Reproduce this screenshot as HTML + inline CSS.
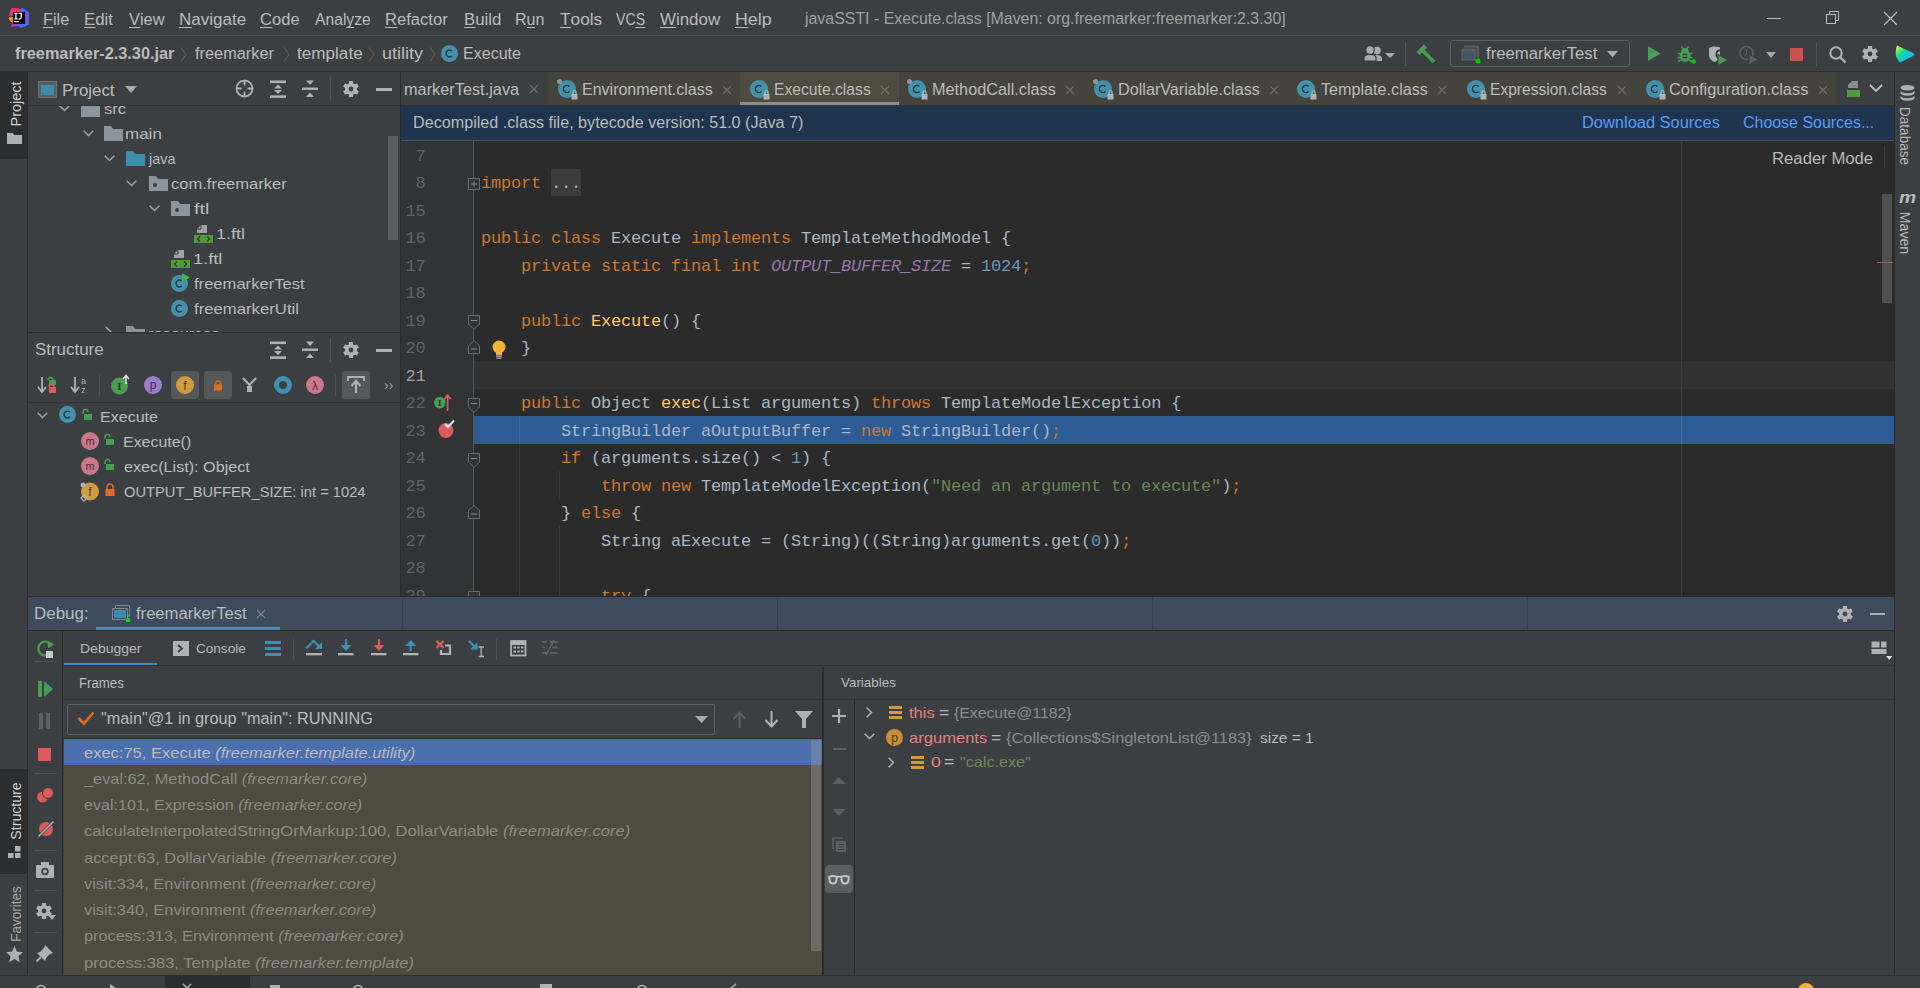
<!DOCTYPE html>
<html><head><meta charset="utf-8">
<style>
*{margin:0;padding:0;box-sizing:border-box}
html,body{width:1920px;height:988px;overflow:hidden;background:#3c3f41}
body{position:relative;font-family:"Liberation Sans",sans-serif;font-size:16px;color:#bbbbbb}
.a{position:absolute}
.t{position:absolute;white-space:nowrap}
.t u{text-decoration:none;border-bottom:1px solid currentColor;display:inline-block;line-height:14px;height:15px}
.cd{position:absolute;font-family:"Liberation Mono",monospace;font-size:17px;letter-spacing:-0.2px;white-space:pre;line-height:17px;color:#a9b7c6}
.k{color:#cc7832}.n{color:#6897bb}.s{color:#6a8759}.f{color:#9876aa;font-style:italic}.y{color:#ffc66d}
svg{position:absolute;overflow:visible}
</style></head>
<body>

<div class="a" style="left:0px;top:0px;width:1920px;height:35px;background:#3c3f41;"></div>
<div class="a" style="left:0px;top:35px;width:1920px;height:1px;background:#4b4e50;"></div>
<svg style="left:0px;top:0px" width="36" height="36" viewBox="0 0 36 36"><defs><linearGradient id="lgb" x1="0" y1="0" x2="0" y2="1"><stop offset="0" stop-color="#3b6ff5"/><stop offset="0.5" stop-color="#7a4ee8"/><stop offset="1" stop-color="#2a7df7"/></linearGradient><linearGradient id="lgp" x1="0" y1="0" x2="0" y2="1"><stop offset="0" stop-color="#ff2a5e"/><stop offset="1" stop-color="#e0308a"/></linearGradient></defs>
<polygon points="23,8 29,12.5 29,24.5 21.5,28 17,25.5 17,10" fill="url(#lgb)"/>
<polygon points="12,8 18.5,8.3 21,11 21,16 9,16 10,11" fill="url(#lgp)"/>
<polygon points="9,17 13,17 13,22 11,22 9,19.5" fill="#ff8a1a"/>
<polygon points="11,27 12.5,22 19,24 17,26" fill="#b43ad8"/>
<rect x="13" y="12" width="12" height="12" fill="#000"/>
<path d="M14.3 13.3H17.6M15.95 13.3V18.8M14.3 18.8H17.6M18.6 13.3H21.2V17.5C21.2 18.5 20.5 19 19.5 19H18.6" fill="none" stroke="#fff" stroke-width="1.3"/>
<rect x="14.2" y="21" width="4.8" height="1.3" fill="#ddd"/></svg>
<div class="t" style="left:43.10px;top:11.96px;font-size:16px;line-height:16px;color:#bbbbbb;transform:scaleX(1.0193);transform-origin:0 0;"><u>F</u>ile</div>
<div class="t" style="left:83.66px;top:11.96px;font-size:16px;line-height:16px;color:#bbbbbb;transform:scaleX(1.0480);transform-origin:0 0;"><u>E</u>dit</div>
<div class="t" style="left:128.75px;top:11.96px;font-size:16px;line-height:16px;color:#bbbbbb;transform:scaleX(1.0233);transform-origin:0 0;"><u>V</u>iew</div>
<div class="t" style="left:178.64px;top:11.96px;font-size:16px;line-height:16px;color:#bbbbbb;transform:scaleX(1.0635);transform-origin:0 0;"><u>N</u>avigate</div>
<div class="t" style="left:260.17px;top:11.96px;font-size:16px;line-height:16px;color:#bbbbbb;transform:scaleX(1.0371);transform-origin:0 0;"><u>C</u>ode</div>
<div class="t" style="left:315.00px;top:11.96px;font-size:16px;line-height:16px;color:#bbbbbb;transform:scaleX(0.9793);transform-origin:0 0;">Anal<u>y</u>ze</div>
<div class="t" style="left:385.27px;top:11.96px;font-size:16px;line-height:16px;color:#bbbbbb;transform:scaleX(1.0366);transform-origin:0 0;"><u>R</u>efactor</div>
<div class="t" style="left:463.95px;top:11.96px;font-size:16px;line-height:16px;color:#bbbbbb;transform:scaleX(1.0517);transform-origin:0 0;"><u>B</u>uild</div>
<div class="t" style="left:515.42px;top:11.96px;font-size:16px;line-height:16px;color:#bbbbbb;transform:scaleX(0.9985);transform-origin:0 0;">R<u>u</u>n</div>
<div class="t" style="left:559.65px;top:11.96px;font-size:16px;line-height:16px;color:#bbbbbb;transform:scaleX(1.0800);transform-origin:0 0;"><u>T</u>ools</div>
<div class="t" style="left:616.30px;top:11.96px;font-size:16px;line-height:16px;color:#bbbbbb;transform:scaleX(0.8831);transform-origin:0 0;">VC<u>S</u></div>
<div class="t" style="left:660.00px;top:11.96px;font-size:16px;line-height:16px;color:#bbbbbb;transform:scaleX(1.0563);transform-origin:0 0;"><u>W</u>indow</div>
<div class="t" style="left:734.58px;top:11.96px;font-size:16px;line-height:16px;color:#bbbbbb;transform:scaleX(1.1115);transform-origin:0 0;"><u>H</u>elp</div>
<div class="t" style="left:805.48px;top:10.96px;font-size:16px;line-height:16px;color:#a0a0a0;transform:scaleX(0.9937);transform-origin:0 0;">javaSSTI - Execute.class [Maven: org.freemarker:freemarker:2.3.30]</div>
<div class="a" style="left:1767px;top:18px;width:14px;height:1px;background:#bbbbbb;"></div>
<svg style="left:1824px;top:10px" width="16" height="16" viewBox="0 0 16 16"><rect x="2.5" y="4.5" width="9" height="9" fill="none" stroke="#bbbbbb"/><path d="M5.5 4.5V1.5H14.5V10.5H11.5" fill="none" stroke="#bbbbbb"/></svg>
<svg style="left:1883px;top:11px" width="15" height="15" viewBox="0 0 15 15"><path d="M1 1L14 14M14 1L1 14" stroke="#bbbbbb" stroke-width="1.2"/></svg>
<div class="a" style="left:0px;top:36px;width:1920px;height:35px;background:#3c3f41;"></div>
<div class="a" style="left:0px;top:71px;width:1920px;height:1px;background:#2b2b2b;"></div>
<div class="t" style="left:15.17px;top:46.46px;font-size:16px;line-height:16px;color:#bbbbbb;transform:scaleX(1.0182);transform-origin:0 0;font-weight:bold;">freemarker-2.3.30.jar</div>
<svg style="left:180px;top:47px" width="7" height="15" viewBox="0 0 7 15"><path d="M1 0.5L6 7.5L1 14.5" fill="none" stroke="#5e6060" stroke-width="1.1"/></svg>
<div class="t" style="left:195.24px;top:46.46px;font-size:16px;line-height:16px;color:#bbbbbb;transform:scaleX(1.0213);transform-origin:0 0;">freemarker</div>
<svg style="left:283px;top:47px" width="7" height="15" viewBox="0 0 7 15"><path d="M1 0.5L6 7.5L1 14.5" fill="none" stroke="#5e6060" stroke-width="1.1"/></svg>
<div class="t" style="left:296.53px;top:46.46px;font-size:16px;line-height:16px;color:#bbbbbb;transform:scaleX(1.0698);transform-origin:0 0;">template</div>
<svg style="left:368px;top:47px" width="7" height="15" viewBox="0 0 7 15"><path d="M1 0.5L6 7.5L1 14.5" fill="none" stroke="#5e6060" stroke-width="1.1"/></svg>
<div class="t" style="left:381.92px;top:46.46px;font-size:16px;line-height:16px;color:#bbbbbb;transform:scaleX(1.1261);transform-origin:0 0;">utility</div>
<svg style="left:429px;top:47px" width="7" height="15" viewBox="0 0 7 15"><path d="M1 0.5L6 7.5L1 14.5" fill="none" stroke="#5e6060" stroke-width="1.1"/></svg>
<svg style="left:441px;top:45px" width="20" height="20" viewBox="0 0 20 20"><circle cx="8.5" cy="8.5" r="8.5" fill="#4591ab"/><path d="M10.90 6.10A3.40 3.40 0 1 0 10.90 10.90" fill="none" stroke="#1f3a47" stroke-width="1.45"/></svg>
<div class="t" style="left:462.72px;top:46.46px;font-size:16px;line-height:16px;color:#bbbbbb;transform:scaleX(1.0029);transform-origin:0 0;">Execute</div>
<svg style="left:1363px;top:45px" width="34" height="17" viewBox="0 0 34 17"><path d="M9 16H19V13.5C19 11.5 17 10 14 10C11 10 9 11.5 9 13.5z" fill="#a9a9a9"/><circle cx="14" cy="5.5" r="3.8" fill="#a9a9a9"/><path d="M1 16H13V13C13 10.8 10.5 9.3 7 9.3C3.5 9.3 1 10.8 1 13z" fill="#a9a9a9" stroke="#3c3f41" stroke-width="1.2"/><circle cx="7" cy="5" r="4.3" fill="#a9a9a9" stroke="#3c3f41" stroke-width="1.2"/><path d="M22 8H32L27 13z" fill="#a9a9a9"/></svg>
<div class="a" style="left:1405px;top:42px;width:1px;height:24px;background:#515151;"></div>
<svg style="left:1416px;top:44px" width="20" height="19" viewBox="0 0 20 19"><path d="M0.5 8L8 0.5L11 3.5L3.5 11z" fill="#499c54"/><path d="M6.5 6.5L18 18" stroke="#499c54" stroke-width="3.6"/></svg>
<div class="a" style="left:1450px;top:40px;width:180px;height:27px;background:#3c3f41;border:1px solid #5e6060;border-radius:3px"></div>
<svg style="left:1461px;top:45px" width="20" height="18" viewBox="0 0 20 18"><rect x="3" y="0.5" width="15" height="12" fill="#5a5d5f"/><rect x="0" y="3" width="15" height="13" fill="#5a5d5f" stroke="#3c3f41" stroke-width="1"/><rect x="2" y="6" width="11" height="8" fill="#3a5764"/><circle cx="17" cy="16" r="2.5" fill="#00d000"/></svg>
<div class="t" style="left:1485.83px;top:46.46px;font-size:16px;line-height:16px;color:#bbbbbb;transform:scaleX(1.0432);transform-origin:0 0;">freemarkerTest</div>
<svg style="left:1607px;top:51px" width="11" height="7" viewBox="0 0 11 7"><path d="M0 0H11L5.5 6.5z" fill="#a9a9a9"/></svg>
<svg style="left:1648px;top:46px" width="13" height="16" viewBox="0 0 13 16"><path d="M0 0L12.5 7.5L0 15z" fill="#499c54"/></svg>
<svg style="left:1677px;top:45px" width="19" height="19" viewBox="0 0 19 19"><path d="M4.5 1.5L6.5 4M11.5 1.5L9.5 4" stroke="#499c54" stroke-width="1.6"/><ellipse cx="8" cy="5.5" rx="3.5" ry="2.5" fill="#499c54"/><ellipse cx="8" cy="11" rx="5.5" ry="6" fill="#499c54"/><path d="M0.5 8.5H3M13 8.5H15.5M0.5 12.5H3M13 12.5H15.5M1 16.5L3.5 15M15 16.5L12.5 15" stroke="#499c54" stroke-width="1.5"/><path d="M5.5 9.5H10.5M5.5 12.5H10.5" stroke="#3c3f41" stroke-width="1.3"/><circle cx="16.5" cy="16.5" r="2.3" fill="#00d000"/></svg>
<svg style="left:1708px;top:45px" width="21" height="19" viewBox="0 0 21 19"><path d="M1 3C4 1.5 8 1 12 2.5V10C12 13.5 9 16 6.5 17C4 16 1 13.5 1 10z" fill="#aeb0b2"/><path d="M12 5.5C10 5 8.5 6.5 8.5 9C8.5 12 10 13.5 12 13" fill="none" stroke="#3c3f41" stroke-width="2"/><path d="M10 9.5L20 15L10 20.5z" fill="#499c54" stroke="#3c3f41" stroke-width="1"/></svg>
<svg style="left:1739px;top:45px" width="20" height="20" viewBox="0 0 20 20"><circle cx="7.5" cy="8" r="6.5" fill="none" stroke="#5d5f61" stroke-width="1.6"/><path d="M7.5 4V8.5L6 10.5" stroke="#5d5f61" stroke-width="1.3" fill="none"/><path d="M10 9L19 14.5L10 20z" fill="#5d5f61" stroke="#3c3f41" stroke-width="1"/></svg>
<svg style="left:1766px;top:52px" width="10" height="6" viewBox="0 0 10 6"><path d="M0 0H10L5 6z" fill="#a9a9a9"/></svg>
<div class="a" style="left:1790px;top:48px;width:13px;height:13px;background:#c75450;"></div>
<div class="a" style="left:1816px;top:42px;width:1px;height:24px;background:#515151;"></div>
<svg style="left:1829px;top:46px" width="18" height="17" viewBox="0 0 18 17"><circle cx="7" cy="7" r="5.7" fill="none" stroke="#afb1b3" stroke-width="2"/><path d="M11 11L16.5 16.5" stroke="#afb1b3" stroke-width="2.4"/></svg>
<svg style="left:1862px;top:46px" width="16" height="16" viewBox="0 0 16 16"><rect x="5.92" y="0" width="4.16" height="4.80" rx="0.6" fill="#afb1b3" transform="rotate(0 8.0 8.0)"/><rect x="5.92" y="0" width="4.16" height="4.80" rx="0.6" fill="#afb1b3" transform="rotate(60 8.0 8.0)"/><rect x="5.92" y="0" width="4.16" height="4.80" rx="0.6" fill="#afb1b3" transform="rotate(120 8.0 8.0)"/><rect x="5.92" y="0" width="4.16" height="4.80" rx="0.6" fill="#afb1b3" transform="rotate(180 8.0 8.0)"/><rect x="5.92" y="0" width="4.16" height="4.80" rx="0.6" fill="#afb1b3" transform="rotate(240 8.0 8.0)"/><rect x="5.92" y="0" width="4.16" height="4.80" rx="0.6" fill="#afb1b3" transform="rotate(300 8.0 8.0)"/><circle cx="8.0" cy="8.0" r="5.92" fill="#afb1b3"/><circle cx="8.0" cy="8.0" r="2.40" fill="#3c3f41"/></svg>
<svg style="left:1894px;top:45px" width="22" height="18" viewBox="0 0 22 18"><defs><linearGradient id="lg2" x1="0" y1="0" x2="1" y2="1"><stop offset="0" stop-color="#fcf84a"/><stop offset="0.35" stop-color="#21d789"/><stop offset="0.7" stop-color="#07c3f2"/><stop offset="1" stop-color="#087cfa"/></linearGradient></defs><path d="M3 0.5L18 7.5L21 10L17 12L6 17.5C2.5 14 0 9 3 0.5z" fill="url(#lg2)"/></svg>
<div class="a" style="left:401px;top:72px;width:1494px;height:33px;background:#3c3f41;"></div>
<div class="a" style="left:547px;top:72px;width:1290px;height:33px;background:#45443c;"></div>
<div class="a" style="left:740px;top:72px;width:159px;height:33px;background:#4e4b40;"></div>
<div class="a" style="left:740px;top:102px;width:159px;height:3px;background:#8c8e90;"></div>
<div class="a" style="left:401px;top:105px;width:1494px;height:1px;background:#323232;"></div>
<div class="t" style="left:403.86px;top:82.46px;font-size:16px;line-height:16px;color:#bbbbbb;transform:scaleX(1.0193);transform-origin:0 0;">markerTest.java</div>
<svg style="left:529px;top:84px" width="10" height="10" viewBox="0 0 10 10"><path d="M1 1L9 9M9 1L1 9" stroke="#6d6e6f" stroke-width="1.2"/></svg>
<svg style="left:558px;top:80px" width="21" height="21" viewBox="0 0 21 21"><circle cx="9.0" cy="9.0" r="9.0" fill="#4591ab"/><path d="M11.55 6.45A3.60 3.60 0 1 0 11.55 11.55" fill="none" stroke="#1f3a47" stroke-width="1.53"/><rect x="13.5" y="14" width="6" height="5.5" fill="#aab4bb"/><path d="M15 14v-2a1.5 1.5 0 0 1 3 0v2" fill="none" stroke="#aab4bb" stroke-width="1.2"/><circle cx="1.5" cy="1.5" r="2.5" fill="#9aa4ab" opacity="0.85"/></svg>
<div class="t" style="left:581.72px;top:82.46px;font-size:16px;line-height:16px;color:#bbbbbb;transform:scaleX(1.0003);transform-origin:0 0;">Environment.class</div>
<svg style="left:722px;top:85px" width="10" height="10" viewBox="0 0 10 10"><path d="M1 1L9 9M9 1L1 9" stroke="#6d6e6f" stroke-width="1.2"/></svg>
<svg style="left:750px;top:80px" width="21" height="21" viewBox="0 0 21 21"><circle cx="9.0" cy="9.0" r="9.0" fill="#4591ab"/><path d="M11.55 6.45A3.60 3.60 0 1 0 11.55 11.55" fill="none" stroke="#1f3a47" stroke-width="1.53"/><rect x="13.5" y="14" width="6" height="5.5" fill="#aab4bb"/><path d="M15 14v-2a1.5 1.5 0 0 1 3 0v2" fill="none" stroke="#aab4bb" stroke-width="1.2"/></svg>
<div class="t" style="left:773.75px;top:82.46px;font-size:16px;line-height:16px;color:#bbbbbb;transform:scaleX(0.9798);transform-origin:0 0;">Execute.class</div>
<svg style="left:880px;top:85px" width="10" height="10" viewBox="0 0 10 10"><path d="M1 1L9 9M9 1L1 9" stroke="#6d6e6f" stroke-width="1.2"/></svg>
<svg style="left:908px;top:80px" width="21" height="21" viewBox="0 0 21 21"><circle cx="9.0" cy="9.0" r="9.0" fill="#4591ab"/><path d="M11.55 6.45A3.60 3.60 0 1 0 11.55 11.55" fill="none" stroke="#1f3a47" stroke-width="1.53"/><rect x="13.5" y="14" width="6" height="5.5" fill="#aab4bb"/><path d="M15 14v-2a1.5 1.5 0 0 1 3 0v2" fill="none" stroke="#aab4bb" stroke-width="1.2"/><circle cx="1.5" cy="1.5" r="2.5" fill="#9aa4ab" opacity="0.85"/></svg>
<div class="t" style="left:931.70px;top:82.46px;font-size:16px;line-height:16px;color:#bbbbbb;transform:scaleX(1.0167);transform-origin:0 0;">MethodCall.class</div>
<svg style="left:1065px;top:85px" width="10" height="10" viewBox="0 0 10 10"><path d="M1 1L9 9M9 1L1 9" stroke="#6d6e6f" stroke-width="1.2"/></svg>
<svg style="left:1094px;top:80px" width="21" height="21" viewBox="0 0 21 21"><circle cx="9.0" cy="9.0" r="9.0" fill="#4591ab"/><path d="M11.55 6.45A3.60 3.60 0 1 0 11.55 11.55" fill="none" stroke="#1f3a47" stroke-width="1.53"/><rect x="13.5" y="14" width="6" height="5.5" fill="#aab4bb"/><path d="M15 14v-2a1.5 1.5 0 0 1 3 0v2" fill="none" stroke="#aab4bb" stroke-width="1.2"/><circle cx="1.5" cy="1.5" r="2.5" fill="#9aa4ab" opacity="0.85"/></svg>
<div class="t" style="left:1117.71px;top:82.46px;font-size:16px;line-height:16px;color:#bbbbbb;transform:scaleX(1.0116);transform-origin:0 0;">DollarVariable.class</div>
<svg style="left:1269px;top:85px" width="10" height="10" viewBox="0 0 10 10"><path d="M1 1L9 9M9 1L1 9" stroke="#6d6e6f" stroke-width="1.2"/></svg>
<svg style="left:1297px;top:80px" width="21" height="21" viewBox="0 0 21 21"><circle cx="9.0" cy="9.0" r="9.0" fill="#4591ab"/><path d="M11.55 6.45A3.60 3.60 0 1 0 11.55 11.55" fill="none" stroke="#1f3a47" stroke-width="1.53"/><rect x="13.5" y="14" width="6" height="5.5" fill="#aab4bb"/><path d="M15 14v-2a1.5 1.5 0 0 1 3 0v2" fill="none" stroke="#aab4bb" stroke-width="1.2"/></svg>
<div class="t" style="left:1320.68px;top:82.46px;font-size:16px;line-height:16px;color:#bbbbbb;transform:scaleX(1.0099);transform-origin:0 0;">Template.class</div>
<svg style="left:1437px;top:85px" width="10" height="10" viewBox="0 0 10 10"><path d="M1 1L9 9M9 1L1 9" stroke="#6d6e6f" stroke-width="1.2"/></svg>
<svg style="left:1467px;top:80px" width="21" height="21" viewBox="0 0 21 21"><circle cx="9.0" cy="9.0" r="9.0" fill="#4591ab"/><path d="M11.55 6.45A3.60 3.60 0 1 0 11.55 11.55" fill="none" stroke="#1f3a47" stroke-width="1.53"/><rect x="13.5" y="14" width="6" height="5.5" fill="#aab4bb"/><path d="M15 14v-2a1.5 1.5 0 0 1 3 0v2" fill="none" stroke="#aab4bb" stroke-width="1.2"/></svg>
<div class="t" style="left:1489.76px;top:82.46px;font-size:16px;line-height:16px;color:#bbbbbb;transform:scaleX(0.9726);transform-origin:0 0;">Expression.class</div>
<svg style="left:1617px;top:85px" width="10" height="10" viewBox="0 0 10 10"><path d="M1 1L9 9M9 1L1 9" stroke="#6d6e6f" stroke-width="1.2"/></svg>
<svg style="left:1646px;top:80px" width="21" height="21" viewBox="0 0 21 21"><circle cx="9.0" cy="9.0" r="9.0" fill="#4591ab"/><path d="M11.55 6.45A3.60 3.60 0 1 0 11.55 11.55" fill="none" stroke="#1f3a47" stroke-width="1.53"/><rect x="13.5" y="14" width="6" height="5.5" fill="#aab4bb"/><path d="M15 14v-2a1.5 1.5 0 0 1 3 0v2" fill="none" stroke="#aab4bb" stroke-width="1.2"/></svg>
<div class="t" style="left:1669.18px;top:82.46px;font-size:16px;line-height:16px;color:#bbbbbb;transform:scaleX(1.0243);transform-origin:0 0;">Configuration.class</div>
<svg style="left:1818px;top:85px" width="10" height="10" viewBox="0 0 10 10"><path d="M1 1L9 9M9 1L1 9" stroke="#6d6e6f" stroke-width="1.2"/></svg>
<svg style="left:1847px;top:80px" width="14" height="18" viewBox="0 0 14 18"><path d="M5 1H11V8H1V5z" fill="#8a8c8e"/><rect x="0" y="10" width="13" height="7" fill="#4f9a3a"/></svg>
<svg style="left:1869px;top:84px" width="14" height="9" viewBox="0 0 14 9"><path d="M1 1L7 7L13 1" fill="none" stroke="#bbbbbb" stroke-width="1.8"/></svg>
<div class="a" style="left:401px;top:106px;width:1494px;height:34px;background:#1e344f;"></div>
<div class="a" style="left:401px;top:140px;width:1494px;height:1px;background:#4a5560;"></div>
<div class="t" style="left:412.71px;top:114.96px;font-size:16px;line-height:16px;color:#bbbbbb;transform:scaleX(1.0092);transform-origin:0 0;">Decompiled .class file, bytecode version: 51.0 (Java 7)</div>
<div class="t" style="left:1581.69px;top:114.96px;font-size:16px;line-height:16px;color:#589df6;transform:scaleX(1.0266);transform-origin:0 0;">Download Sources</div>
<div class="t" style="left:1743.20px;top:114.96px;font-size:16px;line-height:16px;color:#589df6;transform:scaleX(0.9966);transform-origin:0 0;">Choose Sources...</div>
<div class="a" style="left:0px;top:72px;width:27px;height:903px;background:#3c3f41;"></div>
<div class="a" style="left:0px;top:72px;width:27px;height:87px;background:#2b2d2e;"></div>
<div class="a" style="left:27px;top:72px;width:1px;height:903px;background:#2b2b2b;"></div>
<div class="t" style="left:-5.59px;top:96.52px;width:43.57px;height:14px;font-size:14px;line-height:14px;color:#d0d0d0;transform:rotate(-90deg) scaleX(1.0336);transform-origin:50% 50%;text-align:center">Project</div>
<svg style="left:7px;top:132px" width="15" height="12" viewBox="0 0 15 12"><path d="M0 1H6L7 3H15V12H0z" fill="#aeb0b2"/></svg>
<div class="a" style="left:0px;top:769px;width:27px;height:105px;background:#2b2d2e;"></div>
<div class="t" style="left:-12.20px;top:803.72px;width:56.80px;height:14px;font-size:14px;line-height:14px;color:#d0d0d0;transform:rotate(-90deg) scaleX(1.0101);transform-origin:50% 50%;text-align:center">Structure</div>
<svg style="left:8px;top:846px" width="13" height="12" viewBox="0 0 13 12"><rect x="0" y="7" width="5.5" height="5" fill="#aeb0b2"/><rect x="7" y="7" width="5.5" height="5" fill="#aeb0b2"/><rect x="7" y="0" width="5.5" height="5.5" fill="#aeb0b2"/></svg>
<div class="t" style="left:-12.58px;top:907.42px;width:57.57px;height:14px;font-size:14px;line-height:14px;color:#a8a8a8;transform:rotate(-90deg) scaleX(0.9643);transform-origin:50% 50%;text-align:center">Favorites</div>
<svg style="left:6px;top:946px" width="17" height="17" viewBox="0 0 17 17"><polygon points="8.5,0 10.9,5.6 17,6.2 12.4,10.2 13.8,16.3 8.5,13.1 3.2,16.3 4.6,10.2 0,6.2 6.1,5.6" fill="#aeb0b2"/></svg>
<div class="a" style="left:28px;top:72px;width:372px;height:525px;background:#3c3f41;"></div>
<svg style="left:59px;top:105px" width="11" height="7" viewBox="0 0 11 7"><path d="M0.7 0.7L5.5 5.5L10.3 0.7" fill="none" stroke="#a0a0a0" stroke-width="1.5"/></svg>
<svg style="left:81px;top:102px" width="19" height="15" viewBox="0 0 19 15"><path d="M0 0H7L9 3H19V15H0z" fill="#8b959c"/></svg>
<div class="t" style="left:103.50px;top:101.30px;font-size:15px;line-height:15px;color:#bbbbbb;transform:scaleX(1.1024);transform-origin:0 0;">src</div>
<svg style="left:83px;top:130px" width="11" height="7" viewBox="0 0 11 7"><path d="M0.7 0.7L5.5 5.5L10.3 0.7" fill="none" stroke="#a0a0a0" stroke-width="1.5"/></svg>
<svg style="left:104px;top:126px" width="19" height="15" viewBox="0 0 19 15"><path d="M0 0H7L9 3H19V15H0z" fill="#8b959c"/></svg>
<div class="t" style="left:124.81px;top:126.30px;font-size:15px;line-height:15px;color:#bbbbbb;transform:scaleX(1.1330);transform-origin:0 0;">main</div>
<svg style="left:104px;top:155px" width="11" height="7" viewBox="0 0 11 7"><path d="M0.7 0.7L5.5 5.5L10.3 0.7" fill="none" stroke="#a0a0a0" stroke-width="1.5"/></svg>
<svg style="left:126px;top:151px" width="19" height="15" viewBox="0 0 19 15"><path d="M0 0H7L9 3H19V15H0z" fill="#3d8fae"/></svg>
<div class="t" style="left:149.43px;top:151.30px;font-size:15px;line-height:15px;color:#bbbbbb;transform:scaleX(0.9626);transform-origin:0 0;">java</div>
<svg style="left:126px;top:180px" width="11" height="7" viewBox="0 0 11 7"><path d="M0.7 0.7L5.5 5.5L10.3 0.7" fill="none" stroke="#a0a0a0" stroke-width="1.5"/></svg>
<svg style="left:149px;top:176px" width="19" height="15" viewBox="0 0 19 15"><path d="M0 0H7L9 3H19V15H0z" fill="#8b959c"/><circle cx="6" cy="9" r="2" fill="#3c3f41"/></svg>
<div class="t" style="left:171.14px;top:175.80px;font-size:15px;line-height:15px;color:#bbbbbb;transform:scaleX(1.1022);transform-origin:0 0;">com.freemarker</div>
<svg style="left:149px;top:205px" width="11" height="7" viewBox="0 0 11 7"><path d="M0.7 0.7L5.5 5.5L10.3 0.7" fill="none" stroke="#a0a0a0" stroke-width="1.5"/></svg>
<svg style="left:171px;top:201px" width="19" height="15" viewBox="0 0 19 15"><path d="M0 0H7L9 3H19V15H0z" fill="#8b959c"/><circle cx="6" cy="9" r="2" fill="#3c3f41"/></svg>
<div class="t" style="left:194.40px;top:201.30px;font-size:15px;line-height:15px;color:#bbbbbb;transform:scaleX(1.3146);transform-origin:0 0;">ftl</div>
<svg style="left:194px;top:225px" width="19" height="18" viewBox="0 0 19 18"><path d="M7 0H13V8H3V4z" fill="#9da0a4"/><path d="M7 0V4H3" fill="none" stroke="#3c3f41" stroke-width="1"/><rect x="0" y="10" width="19" height="8" fill="#4f9a3a"/><path d="M6 11.5L3.5 14L6 16.5M13 11.5L15.5 14L13 16.5" fill="none" stroke="#2d3a2b" stroke-width="1.2"/></svg>
<div class="t" style="left:215.64px;top:226.30px;font-size:15px;line-height:15px;color:#bbbbbb;transform:scaleX(1.1982);transform-origin:0 0;">1.ftl</div>
<svg style="left:171px;top:250px" width="19" height="18" viewBox="0 0 19 18"><path d="M7 0H13V8H3V4z" fill="#9da0a4"/><path d="M7 0V4H3" fill="none" stroke="#3c3f41" stroke-width="1"/><rect x="0" y="10" width="19" height="8" fill="#4f9a3a"/><path d="M6 11.5L3.5 14L6 16.5M13 11.5L15.5 14L13 16.5" fill="none" stroke="#2d3a2b" stroke-width="1.2"/></svg>
<div class="t" style="left:193.33px;top:251.30px;font-size:15px;line-height:15px;color:#bbbbbb;transform:scaleX(1.2117);transform-origin:0 0;">1.ftl</div>
<svg style="left:171px;top:275px" width="20" height="20" viewBox="0 0 20 20"><circle cx="8.5" cy="8.5" r="8.5" fill="#4591ab"/><path d="M10.90 6.10A3.40 3.40 0 1 0 10.90 10.90" fill="none" stroke="#1f3a47" stroke-width="1.45"/></svg>
<svg style="left:182px;top:273px" width="8" height="9" viewBox="0 0 8 9"><path d="M0 0L8 4.5L0 9z" fill="#3fb54a"/></svg>
<div class="t" style="left:194.43px;top:275.80px;font-size:15px;line-height:15px;color:#bbbbbb;transform:scaleX(1.1058);transform-origin:0 0;">freemarkerTest</div>
<svg style="left:171px;top:300px" width="20" height="20" viewBox="0 0 20 20"><circle cx="8.5" cy="8.5" r="8.5" fill="#4591ab"/><path d="M10.90 6.10A3.40 3.40 0 1 0 10.90 10.90" fill="none" stroke="#1f3a47" stroke-width="1.45"/></svg>
<div class="t" style="left:194.43px;top:300.80px;font-size:15px;line-height:15px;color:#bbbbbb;transform:scaleX(1.1143);transform-origin:0 0;">freemarkerUtil</div>
<svg style="left:105px;top:326px" width="7" height="11" viewBox="0 0 7 11"><path d="M0.7 0.7L5.5 5.5L0.7 10.3" fill="none" stroke="#a0a0a0" stroke-width="1.5"/></svg>
<svg style="left:126px;top:326px" width="19" height="15" viewBox="0 0 19 15"><path d="M0 0H7L9 3H19V15H0z" fill="#8b959c"/></svg>
<div class="t" style="left:147.86px;top:326.30px;font-size:15px;line-height:15px;color:#bbbbbb;transform:scaleX(1.0878);transform-origin:0 0;">resources</div>
<div class="a" style="left:388px;top:136px;width:10px;height:104px;background:#5a5c5e;"></div>
<div class="a" style="left:28px;top:72px;width:372px;height:33px;background:#3c3f41;"></div>
<div class="a" style="left:28px;top:105px;width:372px;height:1px;background:#323232;"></div>
<div class="a" style="left:400px;top:72px;width:1px;height:525px;background:#2b2b2b;"></div>
<svg style="left:38px;top:81px" width="19" height="17" viewBox="0 0 19 17"><rect x="0.5" y="0.5" width="18" height="16" fill="#5a5d5f" stroke="#6e7173"/><rect x="3" y="4" width="13" height="10" fill="#3e8cab"/></svg>
<div class="t" style="left:62.15px;top:83.46px;font-size:16px;line-height:16px;color:#bbbbbb;transform:scaleX(1.0555);transform-origin:0 0;">Project</div>
<svg style="left:125px;top:86px" width="12" height="7" viewBox="0 0 12 7"><path d="M0 0H12L6 7z" fill="#a9a9a9"/></svg>
<svg style="left:235.3px;top:79.4px" width="19" height="19" viewBox="0 0 19 19"><circle cx="9.5" cy="9.5" r="8" fill="none" stroke="#afb1b3" stroke-width="1.8"/><path d="M9.5 1.5v5M9.5 12.5v5M1.5 9.5h5M12.5 9.5h5" stroke="#afb1b3" stroke-width="1.8"/></svg>
<svg style="left:270px;top:80px" width="16" height="18" viewBox="0 0 16 18"><rect x="0" y="0.5" width="16" height="2.6" fill="#afb1b3"/><rect x="0" y="15.3" width="16" height="2.6" fill="#afb1b3"/><path d="M8 4.5L12 8.5H4z M8 14L4 10H12z" fill="#afb1b3"/></svg>
<svg style="left:302px;top:80px" width="16" height="18" viewBox="0 0 16 18"><rect x="0" y="7.5" width="16" height="2.4" fill="#afb1b3"/><path d="M4 0.5H12L8 5z M4 17H12L8 12.5z" fill="#afb1b3"/></svg>
<div class="a" style="left:330px;top:77px;width:1px;height:24px;background:#515151;"></div>
<svg style="left:343px;top:81px" width="16" height="16" viewBox="0 0 16 16"><rect x="5.92" y="0" width="4.16" height="4.80" rx="0.6" fill="#afb1b3" transform="rotate(0 8.0 8.0)"/><rect x="5.92" y="0" width="4.16" height="4.80" rx="0.6" fill="#afb1b3" transform="rotate(60 8.0 8.0)"/><rect x="5.92" y="0" width="4.16" height="4.80" rx="0.6" fill="#afb1b3" transform="rotate(120 8.0 8.0)"/><rect x="5.92" y="0" width="4.16" height="4.80" rx="0.6" fill="#afb1b3" transform="rotate(180 8.0 8.0)"/><rect x="5.92" y="0" width="4.16" height="4.80" rx="0.6" fill="#afb1b3" transform="rotate(240 8.0 8.0)"/><rect x="5.92" y="0" width="4.16" height="4.80" rx="0.6" fill="#afb1b3" transform="rotate(300 8.0 8.0)"/><circle cx="8.0" cy="8.0" r="5.92" fill="#afb1b3"/><circle cx="8.0" cy="8.0" r="2.40" fill="#3c3f41"/></svg>
<div class="a" style="left:376px;top:88px;width:16px;height:2.6px;background:#afb1b3;"></div>
<div class="a" style="left:28px;top:332px;width:372px;height:265px;background:#3c3f41;"></div>
<div class="a" style="left:28px;top:332px;width:372px;height:1px;background:#2b2b2b;"></div>
<div class="t" style="left:34.65px;top:342.46px;font-size:16px;line-height:16px;color:#bbbbbb;transform:scaleX(1.0574);transform-origin:0 0;">Structure</div>
<svg style="left:270px;top:341px" width="16" height="18" viewBox="0 0 16 18"><rect x="0" y="0.5" width="16" height="2.6" fill="#afb1b3"/><rect x="0" y="15.3" width="16" height="2.6" fill="#afb1b3"/><path d="M8 4.5L12 8.5H4z M8 14L4 10H12z" fill="#afb1b3"/></svg>
<svg style="left:302px;top:341px" width="16" height="18" viewBox="0 0 16 18"><rect x="0" y="7.5" width="16" height="2.4" fill="#afb1b3"/><path d="M4 0.5H12L8 5z M4 17H12L8 12.5z" fill="#afb1b3"/></svg>
<div class="a" style="left:330px;top:338px;width:1px;height:24px;background:#515151;"></div>
<svg style="left:343px;top:342px" width="16" height="16" viewBox="0 0 16 16"><rect x="5.92" y="0" width="4.16" height="4.80" rx="0.6" fill="#afb1b3" transform="rotate(0 8.0 8.0)"/><rect x="5.92" y="0" width="4.16" height="4.80" rx="0.6" fill="#afb1b3" transform="rotate(60 8.0 8.0)"/><rect x="5.92" y="0" width="4.16" height="4.80" rx="0.6" fill="#afb1b3" transform="rotate(120 8.0 8.0)"/><rect x="5.92" y="0" width="4.16" height="4.80" rx="0.6" fill="#afb1b3" transform="rotate(180 8.0 8.0)"/><rect x="5.92" y="0" width="4.16" height="4.80" rx="0.6" fill="#afb1b3" transform="rotate(240 8.0 8.0)"/><rect x="5.92" y="0" width="4.16" height="4.80" rx="0.6" fill="#afb1b3" transform="rotate(300 8.0 8.0)"/><circle cx="8.0" cy="8.0" r="5.92" fill="#afb1b3"/><circle cx="8.0" cy="8.0" r="2.40" fill="#3c3f41"/></svg>
<div class="a" style="left:376px;top:349px;width:16px;height:2.6px;background:#afb1b3;"></div>
<svg style="left:37px;top:376px" width="20" height="18" viewBox="0 0 20 18"><path d="M5 1V15M1 11L5 16L9 11" fill="none" stroke="#afb1b3" stroke-width="1.8"/><path d="M11 4a2.5 2.5 0 0 1 5 0" fill="none" stroke="#499c54" stroke-width="1.5"/><rect x="12" y="4" width="7" height="5" fill="#499c54"/><path d="M12 11a2.5 2.5 0 0 1 5 0" fill="none" stroke="#db5c5c" stroke-width="1.5"/><rect x="12" y="11" width="7" height="6" fill="#db5c5c"/></svg>
<svg style="left:70px;top:376px" width="18" height="18" viewBox="0 0 18 18"><path d="M5 1V15M1 11L5 16L9 11" fill="none" stroke="#afb1b3" stroke-width="1.8"/><text x="11" y="8" font-family="Liberation Sans" font-size="9" fill="#afb1b3">a</text><text x="11" y="17" font-family="Liberation Sans" font-size="9" fill="#afb1b3">z</text></svg>
<div class="a" style="left:99px;top:375px;width:1px;height:21px;background:#515151;"></div>
<svg style="left:111px;top:375px" width="20" height="20" viewBox="0 0 20 20"><circle cx="8.5" cy="11" r="8.5" fill="#499c54"/><text x="8.5" y="15" text-anchor="middle" font-family="Liberation Serif" font-weight="bold" font-size="11" fill="#2b3a2b">I</text><path d="M15 9V1M12 4L15 0.5L18 4" fill="none" stroke="#dfe1e5" stroke-width="1.5"/></svg>
<svg style="left:144px;top:376px" width="18" height="18" viewBox="0 0 18 18"><circle cx="9" cy="9" r="9" fill="#9a7ec6"/><text x="9" y="13" text-anchor="middle" font-family="Liberation Sans" font-size="12" fill="#3e2e58">p</text></svg>
<div class="a" style="left:171px;top:371px;width:28px;height:28px;background:#555859;border-radius:3px"></div>
<svg style="left:176px;top:376px" width="18" height="18" viewBox="0 0 18 18"><circle cx="9" cy="9" r="9" fill="#d09a3e"/><text x="9" y="13.5" text-anchor="middle" font-family="Liberation Sans" font-size="12" fill="#4e3a17">f</text></svg>
<div class="a" style="left:204px;top:371px;width:28px;height:28px;background:#555859;border-radius:3px"></div>
<svg style="left:213px;top:380px" width="10" height="11" viewBox="0 0 10 11"><path d="M2.5 5V3.5a2.5 2.5 0 0 1 5 0V5" fill="none" stroke="#e06c24" stroke-width="1.5"/><rect x="1" y="4.5" width="8" height="6" fill="#e06c24"/></svg>
<svg style="left:242px;top:377px" width="15" height="16" viewBox="0 0 15 16"><path d="M1 1L7.5 8L14 1M7.5 8V15" fill="none" stroke="#afb1b3" stroke-width="2.2"/><rect x="5" y="9" width="5" height="6" fill="#afb1b3"/></svg>
<svg style="left:274px;top:376px" width="18" height="18" viewBox="0 0 18 18"><circle cx="9" cy="9" r="6.5" fill="none" stroke="#3e8fb0" stroke-width="5"/></svg>
<svg style="left:306px;top:376px" width="18" height="18" viewBox="0 0 18 18"><circle cx="9" cy="9" r="9" fill="#c9778b"/><text x="9" y="13.5" text-anchor="middle" font-family="Liberation Sans" font-size="12" fill="#5a2d3a">&#955;</text></svg>
<div class="a" style="left:335px;top:375px;width:1px;height:21px;background:#515151;"></div>
<div class="a" style="left:342px;top:371px;width:28px;height:28px;background:#555859;border-radius:3px"></div>
<svg style="left:347px;top:376px" width="18" height="18" viewBox="0 0 18 18"><path d="M1 5V1H17V5" fill="none" stroke="#afb1b3" stroke-width="1.8"/><path d="M9 17V6M4.5 10L9 5L13.5 10" fill="none" stroke="#afb1b3" stroke-width="2.2"/></svg>
<div class="t" style="left:384.00px;top:378.15px;font-size:14px;line-height:14px;color:#a0a0a0;">&#8250;&#8250;</div>
<div class="a" style="left:28px;top:402px;width:372px;height:1px;background:#323232;"></div>
<svg style="left:37px;top:412px" width="11" height="7" viewBox="0 0 11 7"><path d="M0.7 0.7L5.5 5.5L10.3 0.7" fill="none" stroke="#a0a0a0" stroke-width="1.5"/></svg>
<svg style="left:59px;top:406px" width="20" height="20" viewBox="0 0 20 20"><circle cx="8.5" cy="8.5" r="8.5" fill="#4591ab"/><path d="M10.90 6.10A3.40 3.40 0 1 0 10.90 10.90" fill="none" stroke="#1f3a47" stroke-width="1.45"/></svg>
<svg style="left:81px;top:409px" width="11" height="12" viewBox="0 0 11 12"><path d="M2 5V3a2.5 2.5 0 0 1 5 0" fill="none" stroke="#499c54" stroke-width="1.5"/><rect x="3" y="5" width="8" height="6" fill="#499c54"/></svg>
<div class="t" style="left:100.32px;top:408.80px;font-size:15px;line-height:15px;color:#bbbbbb;transform:scaleX(1.0697);transform-origin:0 0;">Execute</div>
<svg style="left:81px;top:432px" width="18" height="18" viewBox="0 0 18 18"><circle cx="9" cy="9" r="9" fill="#c9778b"/><text x="9" y="13" text-anchor="middle" font-family="Liberation Sans" font-size="11" fill="#5a2d3a">m</text></svg>
<svg style="left:103px;top:434px" width="11" height="12" viewBox="0 0 11 12"><path d="M2 5V3a2.5 2.5 0 0 1 5 0" fill="none" stroke="#499c54" stroke-width="1.5"/><rect x="3" y="5" width="8" height="6" fill="#499c54"/></svg>
<div class="t" style="left:123.02px;top:433.80px;font-size:15px;line-height:15px;color:#bbbbbb;transform:scaleX(1.0628);transform-origin:0 0;">Execute()</div>
<svg style="left:81px;top:457px" width="18" height="18" viewBox="0 0 18 18"><circle cx="9" cy="9" r="9" fill="#c9778b"/><text x="9" y="13" text-anchor="middle" font-family="Liberation Sans" font-size="11" fill="#5a2d3a">m</text></svg>
<svg style="left:103px;top:459px" width="11" height="12" viewBox="0 0 11 12"><path d="M2 5V3a2.5 2.5 0 0 1 5 0" fill="none" stroke="#499c54" stroke-width="1.5"/><rect x="3" y="5" width="8" height="6" fill="#499c54"/></svg>
<div class="t" style="left:123.65px;top:458.80px;font-size:15px;line-height:15px;color:#bbbbbb;transform:scaleX(1.0781);transform-origin:0 0;">exec(List): Object</div>
<svg style="left:80px;top:482px" width="19" height="19" viewBox="0 0 19 19"><circle cx="10" cy="9.5" r="9" fill="#d09a3e"/><text x="10" y="14" text-anchor="middle" font-family="Liberation Sans" font-size="12" fill="#4e3a17">f</text><circle cx="3" cy="3" r="2.5" fill="#aeb0b2"/><path d="M4 13l3 3l-3 3l-3-3z" fill="none" stroke="#aeb0b2" stroke-width="1.3"/></svg>
<svg style="left:105px;top:484px" width="10" height="12" viewBox="0 0 10 12"><path d="M2 5V3a3 3 0 0 1 6 0v2" fill="none" stroke="#e06c24" stroke-width="1.5"/><rect x="0.5" y="5" width="9" height="7" fill="#e06c24"/></svg>
<div class="t" style="left:123.56px;top:483.80px;font-size:15px;line-height:15px;color:#bbbbbb;transform:scaleX(0.9806);transform-origin:0 0;">OUTPUT_BUFFER_SIZE: int = 1024</div>
<div class="a" style="left:401px;top:141px;width:1494px;height:455px;background:#2b2b2b;"></div>
<div class="a" style="left:401px;top:141px;width:72px;height:455px;background:#313335;"></div>
<div class="a" style="left:473px;top:141px;width:1px;height:455px;background:#555555;"></div>
<div class="a" style="left:474px;top:361.0px;width:1420px;height:27.5px;background:#323232;"></div>
<div class="a" style="left:474px;top:416.0px;width:1420px;height:27.5px;background:#2d5b94;"></div>
<div class="a" style="left:1681px;top:141px;width:1px;height:455px;background:#3b3b3b;"></div>
<div class="a" style="left:1681px;top:416.0px;width:1px;height:27.5px;background:#4a6a9a;"></div>
<div class="a" style="left:519px;top:416.0px;width:1px;height:180.0px;background:#393939;"></div>
<div class="a" style="left:559px;top:471.0px;width:1px;height:27.5px;background:#393939;"></div>
<div class="a" style="left:559px;top:526.0px;width:1px;height:70.0px;background:#393939;"></div>
<div class="a" style="left:519px;top:416.0px;width:1px;height:27.5px;background:#45679a;"></div>
<div class="cd" style="left:415.5px;top:147.60px;color:#606366">7</div>
<div class="cd" style="left:415.5px;top:175.10px;color:#606366">8</div>
<div class="cd" style="left:405.5px;top:202.60px;color:#606366">15</div>
<div class="cd" style="left:405.5px;top:230.10px;color:#606366">16</div>
<div class="cd" style="left:405.5px;top:257.60px;color:#606366">17</div>
<div class="cd" style="left:405.5px;top:285.10px;color:#606366">18</div>
<div class="cd" style="left:405.5px;top:312.60px;color:#606366">19</div>
<div class="cd" style="left:405.5px;top:340.10px;color:#606366">20</div>
<div class="cd" style="left:405.5px;top:367.60px;color:#a4a3a3">21</div>
<div class="cd" style="left:405.5px;top:395.10px;color:#606366">22</div>
<div class="cd" style="left:405.5px;top:422.60px;color:#606366">23</div>
<div class="cd" style="left:405.5px;top:450.10px;color:#606366">24</div>
<div class="cd" style="left:405.5px;top:477.60px;color:#606366">25</div>
<div class="cd" style="left:405.5px;top:505.10px;color:#606366">26</div>
<div class="cd" style="left:405.5px;top:532.60px;color:#606366">27</div>
<div class="cd" style="left:405.5px;top:560.10px;color:#606366">28</div>
<div class="cd" style="left:405.5px;top:587.60px;color:#606366">29</div>
<div class="a" style="left:551px;top:169px;width:30px;height:27px;background:#3b3b3b;"></div>
<div class="cd" style="left:481px;top:175.10px"><span class="k">import</span> <span style="color:#a9b7c6">...</span></div>
<div class="cd" style="left:481px;top:230.10px"><span class="k">public class</span> Execute <span class="k">implements</span> TemplateMethodModel {</div>
<div class="cd" style="left:521px;top:257.60px"><span class="k">private static final int</span> <span class="f">OUTPUT_BUFFER_SIZE</span> = <span class="n">1024</span><span class="k">;</span></div>
<div class="cd" style="left:521px;top:312.60px"><span class="k">public</span> <span class="y">Execute</span>() {</div>
<div class="cd" style="left:521px;top:340.10px">}</div>
<div class="cd" style="left:521px;top:395.10px"><span class="k">public</span> Object <span class="y">exec</span>(List arguments) <span class="k">throws</span> TemplateModelException {</div>
<div class="cd" style="left:561px;top:422.60px">StringBuilder aOutputBuffer = <span class="k">new</span> StringBuilder()<span class="k">;</span></div>
<div class="cd" style="left:561px;top:450.10px"><span class="k">if</span> (arguments.size() &lt; <span class="n">1</span>) {</div>
<div class="cd" style="left:601px;top:477.60px"><span class="k">throw new</span> TemplateModelException(<span class="s">"Need an argument to execute"</span>)<span class="k">;</span></div>
<div class="cd" style="left:561px;top:505.10px">} <span class="k">else</span> {</div>
<div class="cd" style="left:601px;top:532.60px">String aExecute = (String)((String)arguments.get(<span class="n">0</span>))<span class="k">;</span></div>
<div class="cd" style="left:601px;top:587.60px"><span class="k">try</span> {</div>
<svg style="left:468px;top:178px" width="12" height="12" viewBox="0 0 12 12"><rect x="0.5" y="0.5" width="11" height="11" fill="#313335" stroke="#6b6b6b"/><path d="M3 6H9M6 3V9" stroke="#8c8c8c" stroke-width="1"/></svg>
<svg style="left:468px;top:315px" width="12" height="15" viewBox="0 0 12 15"><path d="M0.5 0.5H11.5V9L6 14.5L0.5 9z" fill="#313335" stroke="#6b6b6b"/><path d="M3 5.5H9" stroke="#8c8c8c"/></svg>
<svg style="left:468px;top:340px" width="12" height="14" viewBox="0 0 12 14"><path d="M0.5 13.5H11.5V5.5L6 0.5L0.5 5.5z" fill="#313335" stroke="#6b6b6b"/><path d="M3 9H9" stroke="#8c8c8c"/></svg>
<svg style="left:468px;top:398px" width="12" height="15" viewBox="0 0 12 15"><path d="M0.5 0.5H11.5V9L6 14.5L0.5 9z" fill="#313335" stroke="#6b6b6b"/><path d="M3 5.5H9" stroke="#8c8c8c"/></svg>
<svg style="left:468px;top:453px" width="12" height="15" viewBox="0 0 12 15"><path d="M0.5 0.5H11.5V9L6 14.5L0.5 9z" fill="#313335" stroke="#6b6b6b"/><path d="M3 5.5H9" stroke="#8c8c8c"/></svg>
<svg style="left:468px;top:505px" width="12" height="14" viewBox="0 0 12 14"><path d="M0.5 13.5H11.5V5.5L6 0.5L0.5 5.5z" fill="#313335" stroke="#6b6b6b"/><path d="M3 9H9" stroke="#8c8c8c"/></svg>
<svg style="left:468px;top:591px" width="12" height="15" viewBox="0 0 12 15"><path d="M0.5 0.5H11.5V9L6 14.5L0.5 9z" fill="#313335" stroke="#6b6b6b"/><path d="M3 5.5H9" stroke="#8c8c8c"/></svg>
<svg style="left:434px;top:394px" width="19" height="18" viewBox="0 0 19 18"><circle cx="5.8" cy="8.6" r="5.8" fill="#499c54"/><text x="5.8" y="12" text-anchor="middle" font-family="Liberation Serif" font-weight="bold" font-size="8" fill="#1e2e1e">I</text><path d="M13.6 17V2M10.6 5L13.6 1L16.6 5" fill="none" stroke="#db5c5c" stroke-width="1.6"/></svg>
<svg style="left:438px;top:420px" width="20" height="18" viewBox="0 0 20 18"><circle cx="8" cy="10.5" r="7.5" fill="#db5c5c"/><path d="M7 4L10 7L16 0.5" fill="none" stroke="#e8e8e8" stroke-width="2"/></svg>
<svg style="left:491px;top:340px" width="16" height="20" viewBox="0 0 16 20"><circle cx="8" cy="7" r="6.5" fill="#f1b434"/><rect x="5" y="11" width="6" height="4" fill="#f1b434"/><rect x="5" y="15.5" width="6" height="1.3" fill="#aeb0b2"/><rect x="5.5" y="17.5" width="5" height="1.3" fill="#aeb0b2"/></svg>
<div class="t" style="left:1771.66px;top:151.46px;font-size:16px;line-height:16px;color:#bbbbbb;transform:scaleX(1.0434);transform-origin:0 0;">Reader Mode</div>
<div class="a" style="left:1884px;top:146px;width:1px;height:22px;background:#3b3b3b;"></div>
<div class="a" style="left:1882px;top:194px;width:10px;height:109px;background:#4e4f50;"></div>
<div class="a" style="left:1877px;top:262px;width:16px;height:1px;background:#a0674e;"></div>
<div class="a" style="left:1895px;top:72px;width:25px;height:903px;background:#3c3f41;"></div>
<div class="a" style="left:1894px;top:72px;width:1px;height:903px;background:#2b2b2b;"></div>
<svg style="left:1900px;top:85px" width="15" height="16" viewBox="0 0 15 16"><ellipse cx="7.5" cy="2.8" rx="7" ry="2.8" fill="#aeb0b2"/><path d="M0.5 5.5A7 2.8 0 0 0 14.5 5.5V8A7 2.8 0 0 1 0.5 8z" fill="#aeb0b2"/><path d="M0.5 10.5A7 2.8 0 0 0 14.5 10.5V13A7 2.8 0 0 1 0.5 13z" fill="#aeb0b2"/></svg>
<div class="t" style="left:1875.04px;top:128.62px;width:59.93px;height:14px;font-size:14px;line-height:14px;color:#bbbbbb;transform:rotate(90deg) scaleX(0.9639);transform-origin:50% 50%;text-align:center">Database</div>
<div class="t" style="left:1899.21px;top:188.61px;font-size:17px;line-height:17px;color:#bbbbbb;transform:scaleX(1.1339);transform-origin:0 0;font-style:italic;font-weight:bold;">m</div>
<div class="t" style="left:1883.99px;top:225.72px;width:42.02px;height:14px;font-size:14px;line-height:14px;color:#bbbbbb;transform:rotate(90deg) scaleX(1.0090);transform-origin:50% 50%;text-align:center">Maven</div>
<div class="a" style="left:28px;top:597px;width:1866px;height:378px;background:#3c3f41;"></div>
<div class="a" style="left:28px;top:596px;width:1866px;height:1px;background:#2b2b2b;"></div>
<div class="a" style="left:28px;top:597px;width:1866px;height:33px;background:#3d4b5c;"></div>
<div class="t" style="left:34.45px;top:606.46px;font-size:16px;line-height:16px;color:#bbbbbb;transform:scaleX(1.0580);transform-origin:0 0;">Debug:</div>
<svg style="left:112px;top:605px" width="19" height="18" viewBox="0 0 19 18"><rect x="0.5" y="3.5" width="15" height="11" fill="#3d4b5c" stroke="#7d8790"/><rect x="2" y="5" width="12" height="8" fill="#3e8cab"/><path d="M3.5 3V0.5H17.5V11H16" fill="none" stroke="#7d8790"/><circle cx="16" cy="15" r="2.3" fill="#00e000"/></svg>
<div class="t" style="left:136.13px;top:606.46px;font-size:16px;line-height:16px;color:#bbbbbb;transform:scaleX(1.0376);transform-origin:0 0;">freemarkerTest</div>
<svg style="left:256px;top:609px" width="10" height="10" viewBox="0 0 10 10"><path d="M1 1L9 9M9 1L1 9" stroke="#7b848d" stroke-width="1.2"/></svg>
<div class="a" style="left:96px;top:627px;width:184px;height:3px;background:#4a88c7;"></div>
<div class="a" style="left:402px;top:597px;width:1px;height:33px;background:#35404c;"></div>
<div class="a" style="left:777px;top:597px;width:1px;height:33px;background:#35404c;"></div>
<div class="a" style="left:1152px;top:597px;width:1px;height:33px;background:#35404c;"></div>
<div class="a" style="left:1527px;top:597px;width:1px;height:33px;background:#35404c;"></div>
<svg style="left:1837px;top:606px" width="16" height="16" viewBox="0 0 16 16"><rect x="5.92" y="0" width="4.16" height="4.80" rx="0.6" fill="#afb1b3" transform="rotate(0 8.0 8.0)"/><rect x="5.92" y="0" width="4.16" height="4.80" rx="0.6" fill="#afb1b3" transform="rotate(60 8.0 8.0)"/><rect x="5.92" y="0" width="4.16" height="4.80" rx="0.6" fill="#afb1b3" transform="rotate(120 8.0 8.0)"/><rect x="5.92" y="0" width="4.16" height="4.80" rx="0.6" fill="#afb1b3" transform="rotate(180 8.0 8.0)"/><rect x="5.92" y="0" width="4.16" height="4.80" rx="0.6" fill="#afb1b3" transform="rotate(240 8.0 8.0)"/><rect x="5.92" y="0" width="4.16" height="4.80" rx="0.6" fill="#afb1b3" transform="rotate(300 8.0 8.0)"/><circle cx="8.0" cy="8.0" r="5.92" fill="#afb1b3"/><circle cx="8.0" cy="8.0" r="2.40" fill="#3d4b5c"/></svg>
<div class="a" style="left:1870px;top:613px;width:15px;height:2px;background:#afb1b3;"></div>
<div class="a" style="left:28px;top:630px;width:1866px;height:1px;background:#2b2b2b;"></div>
<div class="a" style="left:62px;top:631px;width:1px;height:344px;background:#2b2b2b;"></div>
<svg style="left:37px;top:640px" width="18" height="18" viewBox="0 0 18 18"><path d="M14 4.5A7 7 0 1 0 13 14" fill="none" stroke="#499c54" stroke-width="2.2"/><path d="M10.5 0.5L17 4.5L11 8.5z" fill="#499c54"/><rect x="9" y="11" width="7" height="7" fill="#c9c9c9"/></svg>
<div class="a" style="left:34px;top:661px;width:23px;height:1px;background:#515151;"></div>
<svg style="left:38px;top:681px" width="15" height="16" viewBox="0 0 15 16"><rect x="0" y="0" width="4" height="16" fill="#499c54"/><path d="M6 0L15 8L6 16z" fill="#499c54"/></svg>
<svg style="left:39px;top:713px" width="11" height="16" viewBox="0 0 11 16"><rect x="0" y="0" width="4" height="16" fill="#5d5f61"/><rect x="7" y="0" width="4" height="16" fill="#5d5f61"/></svg>
<div class="a" style="left:38px;top:748px;width:13px;height:13px;background:#db5c5c;"></div>
<div class="a" style="left:34px;top:773px;width:23px;height:1px;background:#515151;"></div>
<svg style="left:37px;top:787px" width="18" height="16" viewBox="0 0 18 16"><circle cx="5.5" cy="10" r="5.5" fill="#db5c5c"/><circle cx="11" cy="6" r="5.5" fill="#db5c5c" stroke="#3c3f41" stroke-width="1"/></svg>
<svg style="left:37px;top:820px" width="18" height="18" viewBox="0 0 18 18"><circle cx="9" cy="9" r="7" fill="#db5c5c"/><path d="M1 17L17 1" stroke="#3c3f41" stroke-width="3"/><path d="M1.5 16.5L16.5 1.5" stroke="#afb1b3" stroke-width="1.6"/></svg>
<div class="a" style="left:34px;top:850px;width:23px;height:1px;background:#515151;"></div>
<svg style="left:36px;top:862px" width="18" height="16" viewBox="0 0 18 16"><rect x="0" y="3" width="18" height="13" rx="1" fill="#afb1b3"/><rect x="5" y="0" width="8" height="4" fill="#afb1b3"/><circle cx="9" cy="9.5" r="3.7" fill="#3c3f41"/><circle cx="9" cy="9.5" r="2" fill="#afb1b3"/></svg>
<div class="a" style="left:34px;top:890px;width:23px;height:1px;background:#515151;"></div>
<svg style="left:36px;top:903px" width="16" height="16" viewBox="0 0 16 16"><rect x="5.92" y="0" width="4.16" height="4.80" rx="0.6" fill="#afb1b3" transform="rotate(0 8.0 8.0)"/><rect x="5.92" y="0" width="4.16" height="4.80" rx="0.6" fill="#afb1b3" transform="rotate(60 8.0 8.0)"/><rect x="5.92" y="0" width="4.16" height="4.80" rx="0.6" fill="#afb1b3" transform="rotate(120 8.0 8.0)"/><rect x="5.92" y="0" width="4.16" height="4.80" rx="0.6" fill="#afb1b3" transform="rotate(180 8.0 8.0)"/><rect x="5.92" y="0" width="4.16" height="4.80" rx="0.6" fill="#afb1b3" transform="rotate(240 8.0 8.0)"/><rect x="5.92" y="0" width="4.16" height="4.80" rx="0.6" fill="#afb1b3" transform="rotate(300 8.0 8.0)"/><circle cx="8.0" cy="8.0" r="5.92" fill="#afb1b3"/><circle cx="8.0" cy="8.0" r="2.40" fill="#3c3f41"/></svg>
<svg style="left:48px;top:915px" width="8" height="5" viewBox="0 0 8 5"><path d="M0 0H8L4 5z" fill="#afb1b3"/></svg>
<div class="a" style="left:34px;top:932px;width:23px;height:1px;background:#515151;"></div>
<svg style="left:36px;top:944px" width="18" height="18" viewBox="0 0 18 18"><path d="M9 1L17 9L14 10L10 14L9 17L1 9L4 8L8 4z" fill="#afb1b3" transform="rotate(0)"/><path d="M5 13L0.5 17.5" stroke="#afb1b3" stroke-width="1.8"/></svg>
<div class="t" style="left:79.68px;top:642.07px;font-size:13.5px;line-height:13.5px;color:#bbbbbb;transform:scaleX(1.0370);transform-origin:0 0;">Debugger</div>
<div class="a" style="left:64px;top:663px;width:93px;height:2px;background:#4a88c7;"></div>
<svg style="left:173px;top:641px" width="16" height="15" viewBox="0 0 16 15"><rect x="0" y="0" width="16" height="15" fill="#afb1b3"/><path d="M5 4L9 7.5L5 11" fill="none" stroke="#3c3f41" stroke-width="1.8"/></svg>
<div class="t" style="left:195.62px;top:642.07px;font-size:13.5px;line-height:13.5px;color:#bbbbbb;transform:scaleX(1.0043);transform-origin:0 0;">Console</div>
<svg style="left:265px;top:641px" width="16" height="15" viewBox="0 0 16 15"><rect x="0" y="0" width="16" height="3" fill="#3e8fb0"/><rect x="0" y="6" width="16" height="3" fill="#3e8fb0"/><rect x="0" y="12" width="16" height="3" fill="#3e8fb0"/></svg>
<div class="a" style="left:293px;top:639px;width:1px;height:20px;background:#515151;"></div>
<svg style="left:290px;top:632px" width="280" height="34" viewBox="0 0 280 34">
<path d="M16 16.5L23.5 9L30 15" fill="none" stroke="#3e8fb0" stroke-width="2.2"/><path d="M25 17H32V10z" fill="#3e8fb0"/><rect x="16" y="21" width="16" height="2.3" fill="#afb1b3"/>
<path d="M56 7V17" stroke="#3e8fb0" stroke-width="2.2"/><path d="M50.5 13H61.5L56 19z" fill="#3e8fb0"/><rect x="48" y="21" width="15.5" height="2.3" fill="#afb1b3"/>
<path d="M89 7V17" stroke="#db5c5c" stroke-width="2.2"/><path d="M83.5 13H94.5L89 19z" fill="#db5c5c"/><rect x="81" y="21" width="15.5" height="2.3" fill="#afb1b3"/>
<path d="M120.7 19V12" stroke="#3e8fb0" stroke-width="2.2"/><path d="M115 14H126.5L120.7 8z" fill="#3e8fb0"/><rect x="113" y="21" width="15.5" height="2.3" fill="#afb1b3"/>
<path d="M146.5 9L153.5 16M153.5 9L146.5 16" stroke="#db5c5c" stroke-width="2.3"/><path d="M155 13.5H160V22H151V18" fill="none" stroke="#afb1b3" stroke-width="2.2"/>
<path d="M179 9L186 16" stroke="#3e8fb0" stroke-width="2.4"/><path d="M187.5 10V17.5H180z" fill="#3e8fb0"/><path d="M188.5 15H194M191.2 15V24.5M188.5 24.5H194" stroke="#afb1b3" stroke-width="1.3" fill="none"/>
<rect x="221" y="9" width="14.5" height="14.5" fill="none" stroke="#afb1b3" stroke-width="1.8"/><rect x="221" y="9" width="14.5" height="4" fill="#afb1b3"/><path d="M223.5 15.5h2.5M227.2 15.5h2.5M230.9 15.5h2.5M223.5 19.5h2.5M227.2 19.5h2.5M230.9 19.5h2.5" stroke="#afb1b3" stroke-width="2"/>
<path d="M252 10H257M252 15.5H255M252 21H257M260 10H267.5M262 15.5H267.5M260 21H267.5M264 8L256 23" stroke="#5d5f61" stroke-width="1.8"/>
</svg>
<div class="a" style="left:496px;top:639px;width:1px;height:21px;background:#515151;"></div>
<svg style="left:1871px;top:641px" width="22" height="20" viewBox="0 0 22 20"><rect x="0.5" y="0.5" width="8" height="6" fill="#afb1b3"/><rect x="10" y="0.5" width="5.5" height="6" fill="#afb1b3"/><rect x="0.5" y="8" width="15" height="5" fill="#afb1b3"/><path d="M15 15H21.5L18.2 19z" fill="#dfe1e5"/></svg>
<div class="a" style="left:63px;top:665px;width:1831px;height:1px;background:#323232;"></div>
<div class="t" style="left:79.24px;top:676.15px;font-size:14px;line-height:14px;color:#bbbbbb;transform:scaleX(0.9451);transform-origin:0 0;">Frames</div>
<div class="a" style="left:63px;top:699px;width:760px;height:1px;background:#323232;"></div>
<div class="t" style="left:840.60px;top:676.37px;font-size:13.5px;line-height:13.5px;color:#bbbbbb;transform:scaleX(0.9925);transform-origin:0 0;">Variables</div>
<div class="a" style="left:824px;top:699px;width:1070px;height:1px;background:#323232;"></div>
<div class="a" style="left:822px;top:667px;width:2px;height:308px;background:#2b2b2b;"></div>
<div class="a" style="left:67px;top:704px;width:648px;height:31px;background:#3c3f41;border:1px solid #5e6060;border-radius:2px"></div>
<svg style="left:77px;top:711px" width="18" height="15" viewBox="0 0 18 15"><path d="M1.5 7L7 12.5L16.5 1.5" fill="none" stroke="#e06c24" stroke-width="2.6"/></svg>
<div class="t" style="left:100.85px;top:711.16px;font-size:16px;line-height:16px;color:#bbbbbb;transform:scaleX(1.0166);transform-origin:0 0;">"main"@1 in group "main": RUNNING</div>
<svg style="left:695px;top:716px" width="13" height="7" viewBox="0 0 13 7"><path d="M0 0H13L6.5 7z" fill="#a9a9a9"/></svg>
<svg style="left:732px;top:711px" width="15" height="17" viewBox="0 0 15 17"><path d="M7.5 17V2M1.5 8L7.5 1.5L13.5 8" fill="none" stroke="#5d5f61" stroke-width="2"/></svg>
<svg style="left:764px;top:711px" width="15" height="17" viewBox="0 0 15 17"><path d="M7.5 0V15M1.5 9L7.5 15.5L13.5 9" fill="none" stroke="#afb1b3" stroke-width="2"/></svg>
<svg style="left:795px;top:711px" width="18" height="17" viewBox="0 0 18 17"><path d="M0 0H18L11 8V17H7V8z" fill="#afb1b3"/></svg>
<div class="a" style="left:63px;top:738px;width:760px;height:1px;background:#2b2b2b;"></div>
<div class="a" style="left:64px;top:739px;width:758px;height:26px;background:#4b6eaf;"></div>
<div class="a" style="left:64px;top:765px;width:758px;height:210px;background:#4f4b41;"></div>
<div class="a" style="left:811px;top:740px;width:10px;height:25px;background:#6b7fa9;"></div>
<div class="a" style="left:811px;top:765px;width:10px;height:186px;background:#6e6b64;"></div>
<div class="t" style="left:84px;top:745.00px;font-size:15px;line-height:15px;color:#bbbbbb;transform:scaleX(1.0999);transform-origin:0 0">exec:75, Execute <i>(freemarker.template.utility)</i></div>
<div class="t" style="left:84px;top:771.00px;font-size:15px;line-height:15px;color:#8b8b87;transform:scaleX(1.0877);transform-origin:0 0">_eval:62, MethodCall <i>(freemarker.core)</i></div>
<div class="t" style="left:84px;top:797.00px;font-size:15px;line-height:15px;color:#8b8b87;transform:scaleX(1.0754);transform-origin:0 0">eval:101, Expression <i>(freemarker.core)</i></div>
<div class="t" style="left:84px;top:823.00px;font-size:15px;line-height:15px;color:#8b8b87;transform:scaleX(1.1051);transform-origin:0 0">calculateInterpolatedStringOrMarkup:100, DollarVariable <i>(freemarker.core)</i></div>
<div class="t" style="left:84px;top:850.00px;font-size:15px;line-height:15px;color:#8b8b87;transform:scaleX(1.0943);transform-origin:0 0">accept:63, DollarVariable <i>(freemarker.core)</i></div>
<div class="t" style="left:84px;top:876.00px;font-size:15px;line-height:15px;color:#8b8b87;transform:scaleX(1.0945);transform-origin:0 0">visit:334, Environment <i>(freemarker.core)</i></div>
<div class="t" style="left:84px;top:902.00px;font-size:15px;line-height:15px;color:#8b8b87;transform:scaleX(1.0945);transform-origin:0 0">visit:340, Environment <i>(freemarker.core)</i></div>
<div class="t" style="left:84px;top:928.00px;font-size:15px;line-height:15px;color:#8b8b87;transform:scaleX(1.0887);transform-origin:0 0">process:313, Environment <i>(freemarker.core)</i></div>
<div class="t" style="left:84px;top:955.00px;font-size:15px;line-height:15px;color:#8b8b87;transform:scaleX(1.1058);transform-origin:0 0">process:383, Template <i>(freemarker.template)</i></div>
<div class="a" style="left:854px;top:700px;width:1px;height:275px;background:#2b2b2b;"></div>
<svg style="left:832px;top:709px" width="14" height="14" viewBox="0 0 14 14"><path d="M7 0V14M0 7H14" stroke="#afb1b3" stroke-width="2.2"/></svg>
<div class="a" style="left:833px;top:748px;width:13px;height:2px;background:#5d5f61;"></div>
<svg style="left:832px;top:776px" width="14" height="8" viewBox="0 0 14 8"><path d="M0 8L7 1L14 8z" fill="#5d5f61"/></svg>
<svg style="left:832px;top:809px" width="14" height="8" viewBox="0 0 14 8"><path d="M0 0L7 7L14 0z" fill="#5d5f61"/></svg>
<svg style="left:832px;top:837px" width="15" height="16" viewBox="0 0 15 16"><path d="M1 12V1H11" fill="none" stroke="#5d5f61" stroke-width="1.6"/><rect x="4" y="4" width="10" height="11" fill="#5d5f61"/><path d="M6 7.5H12M6 10H12M6 12.5H12" stroke="#3c3f41" stroke-width="1"/></svg>
<div class="a" style="left:825px;top:865px;width:28px;height:28px;background:#5b5e60;border-radius:4px"></div>
<svg style="left:828px;top:873px" width="22" height="12" viewBox="0 0 22 12"><path d="M1.2 3.8C3 2.8 6 2.8 8.8 3.6L8.4 7.5C8 9.5 7 10.6 5 10.6C3 10.6 2 9.5 1.6 7.5z" fill="none" stroke="#c4c6c8" stroke-width="1.9"/><path d="M20.8 3.8C19 2.8 16 2.8 13.2 3.6L13.6 7.5C14 9.5 15 10.6 17 10.6C19 10.6 20 9.5 20.4 7.5z" fill="none" stroke="#c4c6c8" stroke-width="1.9"/><path d="M8.8 3.8H13.2" stroke="#c4c6c8" stroke-width="1.6"/></svg>
<svg style="left:866px;top:707px" width="7" height="11" viewBox="0 0 7 11"><path d="M0.7 0.7L5.5 5.5L0.7 10.3" fill="none" stroke="#afb1b3" stroke-width="1.5"/></svg>
<svg style="left:889px;top:706px" width="13" height="13" viewBox="0 0 13 13"><rect x="0" y="0" width="13" height="3" fill="#d09a3e"/><rect x="0" y="5" width="13" height="3" fill="#d09a3e"/><rect x="0" y="10" width="13" height="3" fill="#d09a3e"/></svg>
<div class="t" style="left:909.43px;top:705.73px;font-size:14.5px;line-height:14.5px;color:#e57f7f;transform:scaleX(1.1434);transform-origin:0 0;">this</div>
<div class="t" style="left:939.13px;top:705.73px;font-size:14.5px;line-height:14.5px;color:#bbbbbb;transform:scaleX(1.1963);transform-origin:0 0;">=</div>
<div class="t" style="left:954.08px;top:705.73px;font-size:14.5px;line-height:14.5px;color:#8c8c8c;transform:scaleX(1.0889);transform-origin:0 0;">{Execute@1182}</div>
<svg style="left:864px;top:733px" width="11" height="7" viewBox="0 0 11 7"><path d="M0.7 0.7L5.5 5.5L10.3 0.7" fill="none" stroke="#afb1b3" stroke-width="1.5"/></svg>
<svg style="left:886px;top:729px" width="17" height="17" viewBox="0 0 17 17"><circle cx="8.5" cy="8.5" r="8.5" fill="#c88e37"/><text x="8.5" y="12.5" text-anchor="middle" font-family="Liberation Sans" font-size="12" fill="#4e3a17">p</text></svg>
<div class="t" style="left:908.94px;top:730.73px;font-size:14.5px;line-height:14.5px;color:#e57f7f;transform:scaleX(1.1420);transform-origin:0 0;">arguments</div>
<div class="t" style="left:991.13px;top:730.73px;font-size:14.5px;line-height:14.5px;color:#bbbbbb;transform:scaleX(1.1963);transform-origin:0 0;">=</div>
<div class="t" style="left:1005.67px;top:730.73px;font-size:14.5px;line-height:14.5px;color:#8c8c8c;transform:scaleX(1.1287);transform-origin:0 0;">{Collections$SingletonList@1183}</div>
<div class="t" style="left:1259.54px;top:730.73px;font-size:14.5px;line-height:14.5px;color:#bbbbbb;transform:scaleX(1.0649);transform-origin:0 0;">size = 1</div>
<svg style="left:888px;top:757px" width="7" height="11" viewBox="0 0 7 11"><path d="M0.7 0.7L5.5 5.5L0.7 10.3" fill="none" stroke="#afb1b3" stroke-width="1.5"/></svg>
<svg style="left:911px;top:756px" width="13" height="13" viewBox="0 0 13 13"><rect x="0" y="0" width="13" height="3" fill="#d09a3e"/><rect x="0" y="5" width="13" height="3" fill="#d09a3e"/><rect x="0" y="10" width="13" height="3" fill="#d09a3e"/></svg>
<div class="t" style="left:930.79px;top:755.33px;font-size:14.5px;line-height:14.5px;color:#e57f7f;transform:scaleX(1.2213);transform-origin:0 0;">0</div>
<div class="t" style="left:944.11px;top:755.33px;font-size:14.5px;line-height:14.5px;color:#bbbbbb;transform:scaleX(1.2245);transform-origin:0 0;">=</div>
<div class="t" style="left:959.95px;top:755.33px;font-size:14.5px;line-height:14.5px;color:#6a8759;transform:scaleX(1.1157);transform-origin:0 0;">"calc.exe"</div>
<div class="a" style="left:0px;top:975px;width:1920px;height:13px;background:#3c3f41;"></div>
<div class="a" style="left:0px;top:975px;width:1920px;height:1px;background:#2b2b2b;"></div>
<div class="a" style="left:165px;top:976px;width:85px;height:12px;background:#2b2d2e;"></div>
<svg style="left:35px;top:984px" width="12" height="10" viewBox="0 0 12 10"><circle cx="6" cy="6" r="4.5" fill="none" stroke="#afb1b3" stroke-width="1.6"/></svg>
<svg style="left:110px;top:984px" width="10" height="10" viewBox="0 0 10 10"><path d="M0 0L9 6L0 12z" fill="#afb1b3"/></svg>
<svg style="left:182px;top:983px" width="10" height="10" viewBox="0 0 10 10"><path d="M1 1L5 5M9 1L5 5" stroke="#afb1b3" stroke-width="1.5"/></svg>
<div class="a" style="left:270px;top:985px;width:10px;height:5px;background:#afb1b3;"></div>
<svg style="left:352px;top:984px" width="12" height="10" viewBox="0 0 12 10"><circle cx="6" cy="6" r="4.5" fill="none" stroke="#afb1b3" stroke-width="1.6"/></svg>
<div class="a" style="left:540px;top:984px;width:12px;height:5px;background:#afb1b3;"></div>
<svg style="left:636px;top:984px" width="12" height="10" viewBox="0 0 12 10"><circle cx="6" cy="6" r="4.5" fill="none" stroke="#afb1b3" stroke-width="1.6"/></svg>
<svg style="left:728px;top:984px" width="10" height="10" viewBox="0 0 10 10"><path d="M8 0L1 6" stroke="#afb1b3" stroke-width="1.5"/></svg>
<svg style="left:1797px;top:982px" width="18" height="10" viewBox="0 0 18 10"><circle cx="9" cy="9" r="8" fill="#f1b434"/></svg>
</body></html>
